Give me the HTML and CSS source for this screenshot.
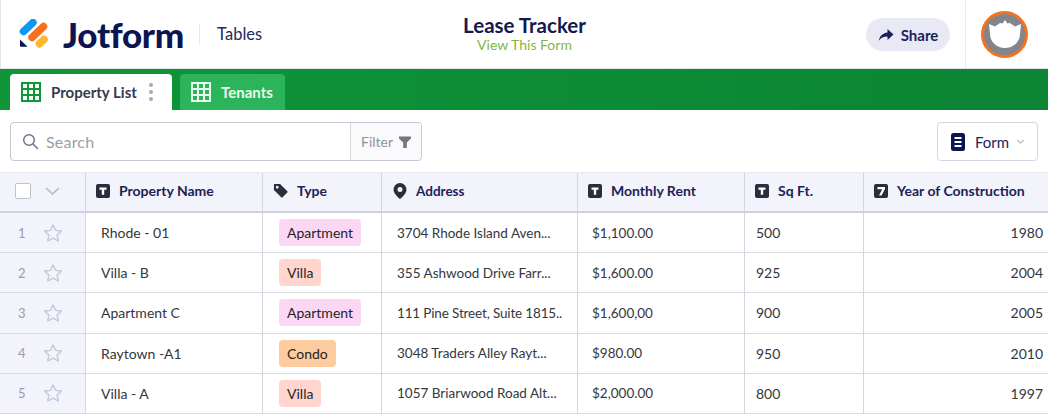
FILE: index.html
```html
<!DOCTYPE html>
<html lang="en">
<head>
<meta charset="utf-8">
<title>Lease Tracker</title>
<link rel="stylesheet" href="styles.css">
</head>
<body>
<svg class="defs" width="0" height="0" aria-hidden="true">
  <symbol id="grid" viewBox="0 0 20 20"><path d="M1 1h18v18H1zM1 7h18M1 13h18M7 1v18M13 1v18" fill="none" stroke="currentColor" stroke-width="2"/></symbol>
  <symbol id="star" viewBox="0 0 20 20"><path d="M10 1.8l2.5 5.5 6 .7-4.4 4.1 1.2 5.9L10 15.1 4.700 18l1.200-5.900L1.500 8l6-.7z" fill="none" stroke="#c3c6d4" stroke-width="1.300" stroke-linejoin="round"/></symbol>
  <symbol id="t" viewBox="0 0 14 14"><rect width="14" height="14" rx="2" fill="#2b2d3c"/><path d="M3.500 3.500h7v2.200H8.200v5H5.800v-5H3.500z" fill="#fff"/></symbol>
  <symbol id="pin" viewBox="0 0 14 16"><path d="M7 0a6.500 6.500 0 0 0-6.500 6.500C.5 11 7 16 7 16s6.500-5 6.500-9.500A6.500 6.500 0 0 0 7 0zm0 9a2.500 2.500 0 1 1 0-5 2.500 2.500 0 0 1 0 5z" fill="#2b2d3c"/></symbol>
  <symbol id="tag" viewBox="0 0 16 16"><path d="M1 1.500A.5.5 0 0 1 1.500 1H7.500l7.800 7.800a1 1 0 0 1 0 1.400l-5.100 5.100a1 1 0 0 1-1.400 0L1 7.500zM4.500 6a1.500 1.500 0 1 0 0-3 1.500 1.500 0 0 0 0 3z" fill="#2b2d3c" fill-rule="evenodd"/></symbol>
  <symbol id="seven" viewBox="0 0 14 14"><rect width="14" height="14" rx="2" fill="#2b2d3c"/><path d="M3.500 3h7.500v2L7.500 11.500H5L8.200 5.200H3.500z" fill="#fff"/></symbol>
</svg>

<header class="topbar">
  <div class="brand">
    <svg class="logo" width="30" height="30" viewBox="0 0 30 30" aria-hidden="true">
      <path d="M4.500 12.500L14 3.500" stroke="#0a9bf0" stroke-width="7.500" stroke-linecap="round"/>
      <path d="M13 18.500L24.500 7.500" stroke="#f5701f" stroke-width="7.500" stroke-linecap="round"/>
      <path d="M20.500 24.800L25 20.500" stroke="#ffb629" stroke-width="7.500" stroke-linecap="round"/>
      <path d="M1 20.500v6.300a1 1 0 0 0 1 1h6.500z" fill="#0a1551"/>
    </svg>
    <span class="wordmark">Jotform</span>
    <span class="brand-sep"></span>
    <span class="product">Tables</span>
  </div>
  <div class="title">
    <div class="title-main">Lease Tracker</div>
    <div class="title-sub">View This Form</div>
  </div>
  <div class="actions">
    <button class="share">
      <svg width="16" height="14" viewBox="0 0 16 14" aria-hidden="true"><path d="M9.500 1L15.500 6.500 9.500 12V8.600C5.500 8.600 3 9.800.8 12.800 1.500 8 4.500 5 9.500 4.400z" fill="#1c2257"/></svg>
      Share
    </button>
    <div class="avatar-cell">
      <div class="avatar">
        <svg width="36" height="36" viewBox="0 0 36 36" aria-hidden="true"><path d="M2 8L8 10.500L13 7L15.500 7.500L18 4L20.500 7.500L23 7L28 10.500L34 8L33 18C33 26 26 32 18 32S3 26 3 18Z" fill="#fff"/></svg>
      </div>
    </div>
  </div>
</header>

<nav class="tabs">
  <div class="tab tab-active">
    <svg class="tab-icon" width="20" height="20"><use href="#grid"/></svg>
    <span>Property List</span>
    <span class="kebab"><i></i><i></i><i></i></span>
  </div>
  <div class="tab tab-other">
    <svg class="tab-icon" width="20" height="20"><use href="#grid"/></svg>
    <span>Tenants</span>
  </div>
</nav>

<section class="toolbar">
  <div class="search">
    <div class="search-input">
      <svg width="17" height="17" viewBox="0 0 17 17" aria-hidden="true"><circle cx="7" cy="7" r="5.300" fill="none" stroke="#6f768e" stroke-width="1.500"/><path d="M11 11l4.500 4.500" stroke="#6f768e" stroke-width="1.500" stroke-linecap="round"/></svg>
      <span>Search</span>
    </div>
    <div class="filter">
      <span>Filter</span>
      <svg width="12" height="12" viewBox="0 0 12 12" aria-hidden="true"><path d="M0 .5h12v2L7.800 6.500V12H4.200V6.500L0 2.500z" fill="#73767f"/></svg>
    </div>
  </div>
  <button class="form-btn">
    <svg width="14" height="18" viewBox="0 0 14 18" aria-hidden="true"><rect width="14" height="18" rx="2.500" fill="#0a1551"/><path d="M3.500 5h7M3.500 9h7M3.500 13h7" stroke="#fff" stroke-width="1.800"/></svg>
    <span>Form</span>
    <svg class="form-caret" width="9" height="5" viewBox="0 0 10 6" aria-hidden="true"><path d="M1 1l4 4 4-4" fill="none" stroke="#8b90a3" stroke-width="1.200"/></svg>
  </button>
</section>

<main class="table">
  <div class="row head">
    <div class="cell c0">
      <span class="check"></span>
      <svg width="15" height="8" viewBox="0 0 15 8" aria-hidden="true"><path d="M1 1l6.500 6L14 1" fill="none" stroke="#b5b8c5" stroke-width="1.600"/></svg>
    </div>
    <div class="cell c1"><svg width="14" height="14"><use href="#t"/></svg>Property Name</div>
    <div class="cell c2"><svg width="15" height="15"><use href="#tag"/></svg>Type</div>
    <div class="cell c3"><svg width="14" height="16"><use href="#pin"/></svg>Address</div>
    <div class="cell c4"><svg width="14" height="14"><use href="#t"/></svg>Monthly Rent</div>
    <div class="cell c5"><svg width="14" height="14"><use href="#t"/></svg>Sq Ft.</div>
    <div class="cell c6"><svg width="14" height="14"><use href="#seven"/></svg>Year of Construction</div>
  </div>

  <div class="row">
    <div class="cell c0"><span class="num">1</span><svg width="20" height="20"><use href="#star"/></svg></div>
    <div class="cell c1">Rhode - 01</div>
    <div class="cell c2"><span class="pill apartment">Apartment</span></div>
    <div class="cell c3">3704 Rhode Island Aven...</div>
    <div class="cell c4">$1,100.00</div>
    <div class="cell c5">500</div>
    <div class="cell c6">1980</div>
  </div>
  <div class="row">
    <div class="cell c0"><span class="num">2</span><svg width="20" height="20"><use href="#star"/></svg></div>
    <div class="cell c1">Villa - B</div>
    <div class="cell c2"><span class="pill villa">Villa</span></div>
    <div class="cell c3">355 Ashwood Drive Farr...</div>
    <div class="cell c4">$1,600.00</div>
    <div class="cell c5">925</div>
    <div class="cell c6">2004</div>
  </div>
  <div class="row">
    <div class="cell c0"><span class="num">3</span><svg width="20" height="20"><use href="#star"/></svg></div>
    <div class="cell c1">Apartment C</div>
    <div class="cell c2"><span class="pill apartment">Apartment</span></div>
    <div class="cell c3 tight">111 Pine Street, Suite 1815..</div>
    <div class="cell c4">$1,600,00</div>
    <div class="cell c5">900</div>
    <div class="cell c6">2005</div>
  </div>
  <div class="row">
    <div class="cell c0"><span class="num">4</span><svg width="20" height="20"><use href="#star"/></svg></div>
    <div class="cell c1">Raytown -A1</div>
    <div class="cell c2"><span class="pill condo">Condo</span></div>
    <div class="cell c3">3048 Traders Alley Rayt...</div>
    <div class="cell c4">$980.00</div>
    <div class="cell c5">950</div>
    <div class="cell c6">2010</div>
  </div>
  <div class="row">
    <div class="cell c0"><span class="num">5</span><svg width="20" height="20"><use href="#star"/></svg></div>
    <div class="cell c1">Villa - A</div>
    <div class="cell c2"><span class="pill villa">Villa</span></div>
    <div class="cell c3">1057 Briarwood Road Alt...</div>
    <div class="cell c4">$2,000.00</div>
    <div class="cell c5">800</div>
    <div class="cell c6">1997</div>
  </div>
</main>
</body>
</html>
```
FILE: styles.css
```css
* { box-sizing: border-box; }
html, body { margin: 0; padding: 0; }
body {
  width: 1048px;
  height: 414px;
  overflow: hidden;
  background: #fff;
  font-family: "Lato", "Liberation Sans", sans-serif;
  color: #343C6A;
}
.defs { position: absolute; }
button { font-family: inherit; cursor: pointer; }

.topbar {
  height: 69px;
  display: grid;
  grid-template-columns: 1fr 1fr 1fr;
  align-items: stretch;
  border-bottom: 1px solid #dfe3ea;
  border-left: 1px solid #e4e5ea;
}
.brand { display: flex; align-items: center; padding-left: 18px; }
.logo { flex: none; }
.wordmark {
  margin-left: 14px;
  font-size: 35px;
  font-weight: 900;
  letter-spacing: -0.25px;
  color: #0a1551;
}
.brand-sep { width: 1px; height: 20px; background: #e6e8ef; margin-left: 15px; }
.product { margin-left: 17px; font-size: 16.500px; color: #1f2a5c; }

.title {
  display: flex;
  flex-direction: column;
  align-items: center;
  justify-content: center;
}
.title-main { font-size: 20.500px; line-height: 22px; font-weight: 700; color: #14194f; margin-top: -3px; }
.title-sub { font-size: 14px; line-height: 15px; color: #7fb93c; margin-top: 1px; }

.actions { display: flex; justify-content: flex-end; align-items: stretch; }
.share {
  align-self: center;
  width: 84px;
  height: 33px;
  margin-right: 15px;
  margin-top: 1px;
  display: flex;
  align-items: center;
  justify-content: center;
  gap: 7px;
  border: 0;
  border-radius: 17px;
  background: #e8e9f5;
  font-size: 15px;
  font-weight: 700;
  color: #1c2257;
}
.avatar-cell {
  width: 83px;
  border-left: 1px solid #e8e9ee;
  display: flex;
  align-items: center;
  justify-content: center;
  padding-right: 5px;
}
.avatar {
  width: 47px;
  height: 47px;
  border-radius: 50%;
  border: 3px solid #f2731f;
  background: #84858c;
  display: flex;
  align-items: center;
  justify-content: center;
}

.tabs {
  height: 41px;
  background: linear-gradient(90deg, #0f9638 0%, #0b8433 100%);
  padding: 5px 0 0 10px;
  display: flex;
  gap: 8px;
}
.tab {
  height: 36px;
  display: flex;
  align-items: center;
  border-radius: 4px 4px 0 0;
  font-size: 15px;
}
.tab-active {
  width: 162px;
  background: #fff;
  color: #343a4f;
  padding-left: 11px;
  font-weight: 700;
}
.tab-other {
  width: 105px;
  background: #2cb45a;
  color: #eafbef;
  padding-left: 11px;
  font-weight: 700;
}
.tab-icon { margin-right: 10px; flex: none; }
.tab-active .tab-icon { color: #0f9638; }
.tab-other .tab-icon { color: #e8f9ee; }
.kebab { display: flex; flex-direction: column; gap: 3px; margin-left: 12px; }
.kebab i { display: block; width: 4px; height: 4px; border-radius: 50%; background: #a8abb3; }

.toolbar {
  height: 62px;
  padding: 12px 10px 11px;
  display: flex;
  justify-content: space-between;
}
.search {
  width: 412px;
  display: flex;
  border: 1px solid #c4c8d4;
  border-radius: 4px;
}
.search-input {
  flex: 1;
  display: flex;
  align-items: center;
  gap: 7px;
  padding-left: 11px;
  font-size: 16px;
  letter-spacing: 0.2px;
  color: #9a9ea9;
}
.filter {
  width: 71px;
  border-left: 1px solid #d5d8e1;
  background: #fafafc;
  display: flex;
  align-items: center;
  gap: 6px;
  padding-left: 10px;
  font-size: 14px;
  color: #8f929c;
  border-radius: 0 4px 4px 0;
}
.form-btn {
  width: 101px;
  display: flex;
  align-items: center;
  gap: 10px;
  padding: 0 0 0 13px;
  background: #fff;
  border: 1px solid #d3d6e0;
  border-radius: 4px;
  font-size: 15px;
  color: #1c2257;
}
.form-caret { margin-left: -3px; }

.table { border-top: 1px solid #e9eaf0; }
.row {
  display: grid;
  grid-template-columns: 86px 177px 119px 196px 167px 119px 184px;
  height: 40.200px;
  border-bottom: 1px solid #d8dae3;
  font-size: 14px;
  color: #343640;
}
.row.head {
  height: 40px;
  background: #f2f3fb;
  border-bottom: 2px solid #cfd2de;
  font-weight: 700;
  color: #1c2257;
}
.cell {
  display: flex;
  align-items: center;
  border-right: 1px solid #d3d5df;
  white-space: nowrap;
  overflow: hidden;
  min-width: 0;
}
.cell:last-child { border-right: 0; }
.head .cell { gap: 9px; padding-left: 10px; padding-bottom: 3px; }
.head .cell svg { flex: none; }
.head .c0 { padding-left: 15px; gap: 14px; }
.head .c3 { padding-left: 11px; }
.c0 { background: #f2f3fb; padding-left: 18px; gap: 17px; }
.c1 { padding-left: 15px; }
.c2 { padding-left: 16px; }
.c3 { padding-left: 15px; font-size: 13.500px; }
.c4 { padding-left: 14px; font-size: 13.500px; }
.c5 { padding-left: 11px; }
.c6 { justify-content: flex-end; padding-right: 5px; }
.head .c4 { font-size: 14px; }
.head .c6 { justify-content: flex-start; padding-right: 0; }
.tight { letter-spacing: -0.15px; }
.num { color: #9b9ea9; font-size: 13px; width: 8px; }
.check {
  width: 16px;
  height: 16px;
  border: 1.500px solid #bfc2cf;
  border-radius: 2px;
  background: #fff;
}
.pill {
  display: inline-flex;
  align-items: center;
  height: 27px;
  padding: 0 8px;
  border-radius: 4px;
  color: #1f1f29;
  font-size: 14px;
}
.apartment { background: #fbd7f3; }
.villa { background: #ffd5ce; }
.condo { background: #fdcb9d; }
```
